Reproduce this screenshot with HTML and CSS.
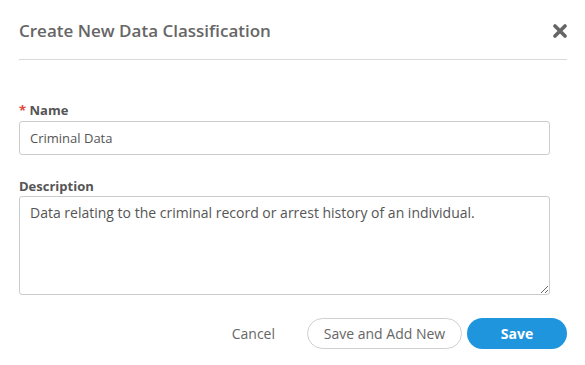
FILE: index.html
```html
<!DOCTYPE html>
<html>
<head>
<meta charset="utf-8">
<link rel="stylesheet" href="styles.css">
</head>
<body>
<div class="dialog">
  <div class="header">
    <h1 class="title">Create New Data Classification</h1>
    <button class="close" aria-label="Close">
      <svg width="14" height="14" viewBox="0 0 14 14"><path d="M2 2 L12 12 M12 2 L2 12" stroke="#666" stroke-width="3.6" stroke-linecap="round"/></svg>
    </button>
  </div>
  <div class="form">
    <label class="label"><span class="req">*</span> Name</label>
    <input class="input" type="text" value="Criminal Data">
    <label class="label label-desc">Description</label>
    <textarea class="textarea">Data relating to the criminal record or arrest history of an individual.</textarea>
  </div>
  <div class="footer">
    <button class="btn-cancel">Cancel</button>
    <button class="btn-outline">Save and Add New</button>
    <button class="btn-primary">Save</button>
  </div>
</div>
</body>
</html>
```
FILE: styles.css
```css
* { box-sizing: border-box; }
body {
  margin: 0;
  background: #fff;
  font-family: "Open Sans", "Liberation Sans", sans-serif;
  color: #555;
}
.dialog {
  padding: 0 18px 0 19px;
}
.header {
  display: flex;
  align-items: center;
  justify-content: space-between;
  padding: 20px 0 17px;
  border-bottom: 1px solid #d9d9d9;
}
.title {
  margin: 0;
  font-size: 17px;
  line-height: 22px;
  font-weight: 600;
  color: #666;
}
.close {
  border: 0;
  background: none;
  padding: 0;
  width: 14px;
  height: 14px;
  display: flex;
  cursor: pointer;
}
.form {
  display: flex;
  flex-direction: column;
  padding: 41px 17px 0 0;
}
.label {
  font-size: 13px;
  line-height: 18px;
  font-weight: 700;
  color: #555;
  margin-bottom: 2px;
}
.req { color: #e0463c; }
.label-desc { margin-top: 22px; margin-bottom: 1px; }
.input {
  height: 34px;
  border: 1px solid #ccc;
  border-radius: 3px;
  padding: 0 10px;
  font: 13px "Open Sans", "Liberation Sans", sans-serif;
  color: #555;
}
.textarea {
  height: 99px;
  border: 1px solid #ccc;
  border-radius: 3px;
  padding: 6px 10px;
  font: 14px/20px "Open Sans", "Liberation Sans", sans-serif;
  color: #555;
  resize: vertical;
}
.footer {
  display: flex;
  justify-content: flex-end;
  align-items: center;
  margin-top: 23px;
  gap: 5px;
}
.footer button {
  font-family: "Open Sans", "Liberation Sans", sans-serif;
  font-size: 14px;
  height: 31px;
  cursor: pointer;
}
.btn-cancel {
  border: 0;
  background: none;
  color: #666;
  padding: 0;
  margin-right: 27px;
}
.btn-outline {
  width: 155px;
  border: 1px solid #d0d0d0;
  border-radius: 16px;
  background: #fff;
  color: #666;
}
.btn-primary {
  width: 100px;
  border: 0;
  border-radius: 16px;
  background: #1f95dd;
  color: #fff;
  font-weight: 700;
}
```
